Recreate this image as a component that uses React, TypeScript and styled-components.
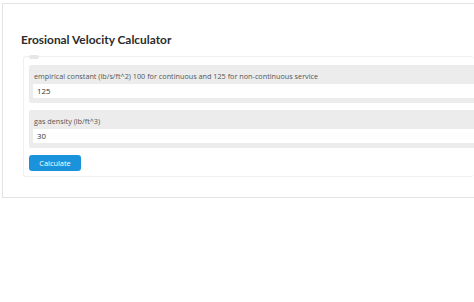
import React, { useState } from "react";
import styled, { createGlobalStyle } from "styled-components";

const GlobalStyle = createGlobalStyle`
  html, body {
    margin: 0;
    padding: 0;
    background: #fff;
    overflow: hidden;
  }
  body {
    font-family: "Open Sans", "Noto Sans", sans-serif;
    color: #333;
  }
`;

const Page = styled.div`
  width: 474px;
  height: 302px;
  padding: 3px 0 0 2px;
  box-sizing: border-box;
  overflow: hidden;
`;

const Card = styled.div`
  width: 500px;
  height: 195px;
  box-sizing: border-box;
  border: 1px solid #e3e3e3;
  padding: 27px 0 0 18px;
`;

const Title = styled.h2`
  margin: 0 0 7px 0;
  font-family: "Lato", "Open Sans", sans-serif;
  font-size: 11.9px;
  font-weight: 700;
  color: #2b2b2b;
  line-height: 18px;
`;

const Fieldset = styled.fieldset`
  position: relative;
  margin: 0 0 0 2px;
  width: 451px;
  box-sizing: border-box;
  border: 1px solid #f0f0f0;
  border-right: none;
  border-radius: 3px;
  padding: 8px 0 5px 5px;
  min-width: 0;
`;

const Legend = styled.span`
  position: absolute;
  left: 5px;
  top: -2px;
  width: 10px;
  height: 4px;
  border-radius: 2px;
  background: #e6e6e6;
`;

const Group = styled.div`
  width: 460px;
  background: #ececec;
  border-radius: 2px;
  padding: 6px 0 5px 4px;
  box-sizing: border-box;
  margin-bottom: 7px;
`;

const Label = styled.label`
  display: block;
  font-size: 7.25px;
  color: #555;
  line-height: 10px;
  margin: 0 0 3px 1px;
`;

const Input = styled.input`
  display: block;
  width: 100%;
  height: 14px;
  box-sizing: border-box;
  border: none;
  background: #fff;
  padding: 0 4px;
  font-family: "Open Sans", "Noto Sans", sans-serif;
  font-size: 7.8px;
  color: #333;
  outline: none;
`;

const Button = styled.button`
  display: block;
  width: 52px;
  height: 16px;
  border: none;
  border-radius: 3px;
  background: #1b93dc;
  color: #fff;
  font-family: "Open Sans", "Noto Sans", sans-serif;
  font-size: 7.4px;
  padding: 0;
  margin-top: 0;
`;

function App() {
  const [k, setK] = useState("125");
  const [rho, setRho] = useState("30");

  return (
    <>
      <GlobalStyle />
      <Page>
        <Card>
          <Title>Erosional Velocity Calculator</Title>
          <Fieldset>
            <Legend />
            <Group>
              <Label>
                empirical constant (lb/s/ft^2) 100 for continuous and 125 for
                non-continuous service
              </Label>
              <Input value={k} onChange={(e) => setK(e.target.value)} />
            </Group>
            <Group>
              <Label>gas density (lb/ft^3)</Label>
              <Input value={rho} onChange={(e) => setRho(e.target.value)} />
            </Group>
            <Button type="button">Calculate</Button>
          </Fieldset>
        </Card>
      </Page>
    </>
  );
}

export default App;
